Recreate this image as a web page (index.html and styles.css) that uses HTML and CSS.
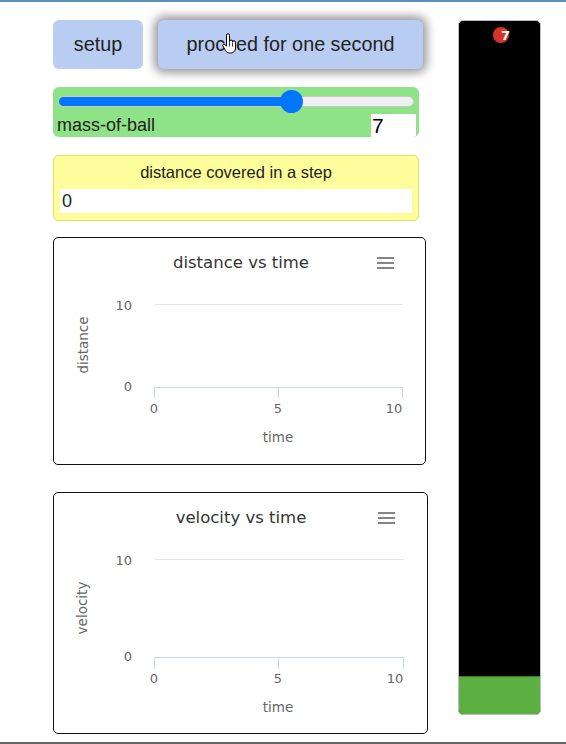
FILE: index.html
```html
<!DOCTYPE html>
<html>
<head>
    <meta charset="UTF-8">
    <title>Falling Ball Model</title>
    <link rel="stylesheet" href="styles.css">
</head>
<body>
    <div class="page">
        <div class="layout">
            <div class="controls">
                <div class="buttons">
                    <button class="btn btn-setup">setup</button>
                    <button class="btn btn-go">proceed for one second
                        <svg class="cursor" width="15" height="21" viewBox="0 0 15 21">
                            <path d="M4.5 2.2a1.5 1.5 0 0 1 3 0V8.5a1.5 1.5 0 0 1 3 0v0.8a1.5 1.5 0 0 1 3 0V15c0 3-2 5-4.6 5H7.6c-2 0-3.1-1-4.1-2.6L0.9 13a1.3 1.3 0 0 1 2.1-1.5L4.5 13.2Z" fill="#fff" stroke="#000" stroke-width="1"/>
                            <path d="M7.5 9v4.5M10.5 10v3.5" stroke="#000" stroke-width="0.8"/>
                        </svg>
                    </button>
                </div>

                <div class="slider-box">
                    <input type="range" class="slider" min="1" max="10" value="7">
                    <div class="slider-row">
                        <span class="slider-label">mass-of-ball</span>
                        <span class="slider-value">7</span>
                    </div>
                </div>

                <div class="monitor">
                    <div class="monitor-label">distance covered in a step</div>
                    <div class="monitor-value">0</div>
                </div>

                <div class="chart chart-distance">
                    <svg width="371" height="226">
                        <text class="chart-title" x="187" y="30" text-anchor="middle">distance vs time</text>
                        <g class="menu">
                            <line x1="323" y1="20" x2="340" y2="20"/>
                            <line x1="323" y1="25" x2="340" y2="25"/>
                            <line x1="323" y1="30" x2="340" y2="30"/>
                        </g>
                        <line class="grid" x1="101" y1="66.5" x2="349" y2="66.5"/>
                        <text class="tick" x="78" y="72" text-anchor="end">10</text>
                        <text class="tick" x="78" y="153" text-anchor="end">0</text>
                        <g class="axis">
                            <line x1="100" y1="149.5" x2="349" y2="149.5"/>
                            <line x1="100.5" y1="149" x2="100.5" y2="160"/>
                            <line x1="224.5" y1="149" x2="224.5" y2="160"/>
                            <line x1="348.5" y1="149" x2="348.5" y2="160"/>
                        </g>
                        <text class="tick" x="100" y="175" text-anchor="middle">0</text>
                        <text class="tick" x="224" y="175" text-anchor="middle">5</text>
                        <text class="tick" x="340" y="175" text-anchor="middle">10</text>
                        <text class="axis-title" x="224" y="204" text-anchor="middle">time</text>
                        <text class="axis-title" x="34" y="107" text-anchor="middle" transform="rotate(-90 34 107)">distance</text>
                    </svg>
                </div>

                <div class="chart chart-velocity">
                    <svg width="373" height="240">
                        <text class="chart-title" x="187" y="30" text-anchor="middle">velocity vs time</text>
                        <g class="menu">
                            <line x1="324" y1="20" x2="341" y2="20"/>
                            <line x1="324" y1="25" x2="341" y2="25"/>
                            <line x1="324" y1="30" x2="341" y2="30"/>
                        </g>
                        <line class="grid" x1="101" y1="66.5" x2="350" y2="66.5"/>
                        <text class="tick" x="78" y="72" text-anchor="end">10</text>
                        <text class="tick" x="78" y="168" text-anchor="end">0</text>
                        <g class="axis">
                            <line x1="100" y1="164.5" x2="350" y2="164.5"/>
                            <line x1="100.5" y1="164" x2="100.5" y2="176"/>
                            <line x1="224.5" y1="164" x2="224.5" y2="176"/>
                            <line x1="349.5" y1="164" x2="349.5" y2="176"/>
                        </g>
                        <text class="tick" x="100" y="190" text-anchor="middle">0</text>
                        <text class="tick" x="224" y="190" text-anchor="middle">5</text>
                        <text class="tick" x="341" y="190" text-anchor="middle">10</text>
                        <text class="axis-title" x="224" y="219" text-anchor="middle">time</text>
                        <text class="axis-title" x="33" y="115" text-anchor="middle" transform="rotate(-90 33 115)">velocity</text>
                    </svg>
                </div>
            </div>

            <div class="view">
                <div class="world">
                    <div class="ball"></div>
                    <span class="ball-label">7</span>
                </div>
                <div class="ground"></div>
            </div>
        </div>
    </div>
</body>
</html>
```

FILE: styles.css
```css
body {
    margin: 0;
    padding: 0;
    background-color: #ffffff;
    font-family: "Liberation Sans", Arial, sans-serif;
    color: #222222;
}

.page {
    box-sizing: border-box;
    height: 744px;
    border-top: 2px solid #5d8fbd;
    border-bottom: 2px solid #666666;
}

.layout {
    display: flex;
    gap: 30px;
    padding: 18px 0 0 53px;
}

.controls {
    width: 375px;
    display: flex;
    flex-direction: column;
}

.buttons {
    display: flex;
    gap: 15px;
}

.btn {
    position: relative;
    height: 49px;
    border: none;
    border-radius: 6px;
    background-color: #b9cdf2;
    color: #222222;
    font-family: "Liberation Sans", Arial, sans-serif;
    font-size: 19.8px;
    padding: 0;
}

.btn-setup {
    width: 90px;
}

.btn-go {
    width: 265px;
    box-shadow: 0 0 10px 4px rgba(0, 0, 0, 0.4);
}

.cursor {
    position: absolute;
    left: 64px;
    top: 13px;
}

.slider-box {
    width: 366px;
    height: 50px;
    box-sizing: border-box;
    margin-top: 18px;
    padding-top: 3px;
    background-color: #8fe387;
    border-radius: 6px;
    overflow: hidden;
}

.slider {
    -webkit-appearance: none;
    appearance: none;
    display: block;
    width: 356px;
    height: 23px;
    margin: 0 0 1px 5px;
    background: transparent;
}

.slider::-webkit-slider-runnable-track {
    height: 11px;
    border-radius: 6px;
    border: 1px solid #c8c8c8;
    box-sizing: border-box;
    background: linear-gradient(to right, #0075ff 0, #0075ff 66%, #efefef 66%, #efefef 100%);
}

.slider::-webkit-slider-thumb {
    -webkit-appearance: none;
    width: 23px;
    height: 23px;
    margin-top: -7px;
    border-radius: 50%;
    background-color: #0075ff;
    border: none;
}

.slider-row {
    display: flex;
    justify-content: space-between;
    height: 23px;
}

.slider-label {
    font-size: 18px;
    line-height: 23px;
    padding-left: 4px;
}

.slider-value {
    width: 44px;
    margin-right: 3px;
    background-color: #ffffff;
    font-size: 21px;
    line-height: 23px;
    padding-left: 1px;
    color: #000000;
}

.monitor {
    width: 366px;
    box-sizing: border-box;
    margin-top: 18px;
    padding: 6px 6px 7px 6px;
    background-color: #fefd9b;
    border: 1px solid #e7df62;
    border-radius: 5px;
}

.monitor-label {
    font-size: 16.5px;
    line-height: 20px;
    text-align: center;
    margin-bottom: 7px;
}

.monitor-value {
    height: 24px;
    background-color: #ffffff;
    font-size: 18px;
    line-height: 24px;
    padding-left: 2px;
}

.chart {
    border: 1px solid #111111;
    border-radius: 5px;
    background-color: #ffffff;
}

.chart svg {
    display: block;
    font-family: "DejaVu Sans", sans-serif;
}

.chart-distance {
    width: 371px;
    height: 226px;
    margin-top: 16px;
}

.chart-velocity {
    width: 373px;
    height: 240px;
    margin-top: 27px;
}

.chart-title {
    font-size: 16.5px;
    fill: #333333;
}

.menu line {
    stroke: #666666;
    stroke-width: 1.6;
}

.grid {
    stroke: #e6e6e6;
    stroke-width: 1;
}

.axis line {
    stroke: #ccd6eb;
    stroke-width: 1;
}

.tick {
    font-size: 13px;
    fill: #666666;
}

.axis-title {
    font-size: 13.5px;
    fill: #666666;
}

.view {
    width: 83px;
    height: 695px;
    box-sizing: border-box;
    border: 1px solid #bdbdbd;
    border-radius: 5px;
    overflow: hidden;
    display: flex;
    flex-direction: column;
    background-color: #000000;
}

.world {
    position: relative;
    flex: 1;
}

.ground {
    height: 37px;
    border-top: 1px solid #3b7a2e;
    background-color: #5bb041;
}

.ball {
    position: absolute;
    left: 34px;
    top: 6px;
    width: 16px;
    height: 16px;
    border-radius: 50%;
    background-color: #d8332a;
}

.ball-label {
    position: absolute;
    left: 42px;
    top: 7px;
    font-family: "DejaVu Sans", sans-serif;
    font-weight: bold;
    font-size: 13px;
    line-height: 15px;
    color: #ffffff;
}
```
